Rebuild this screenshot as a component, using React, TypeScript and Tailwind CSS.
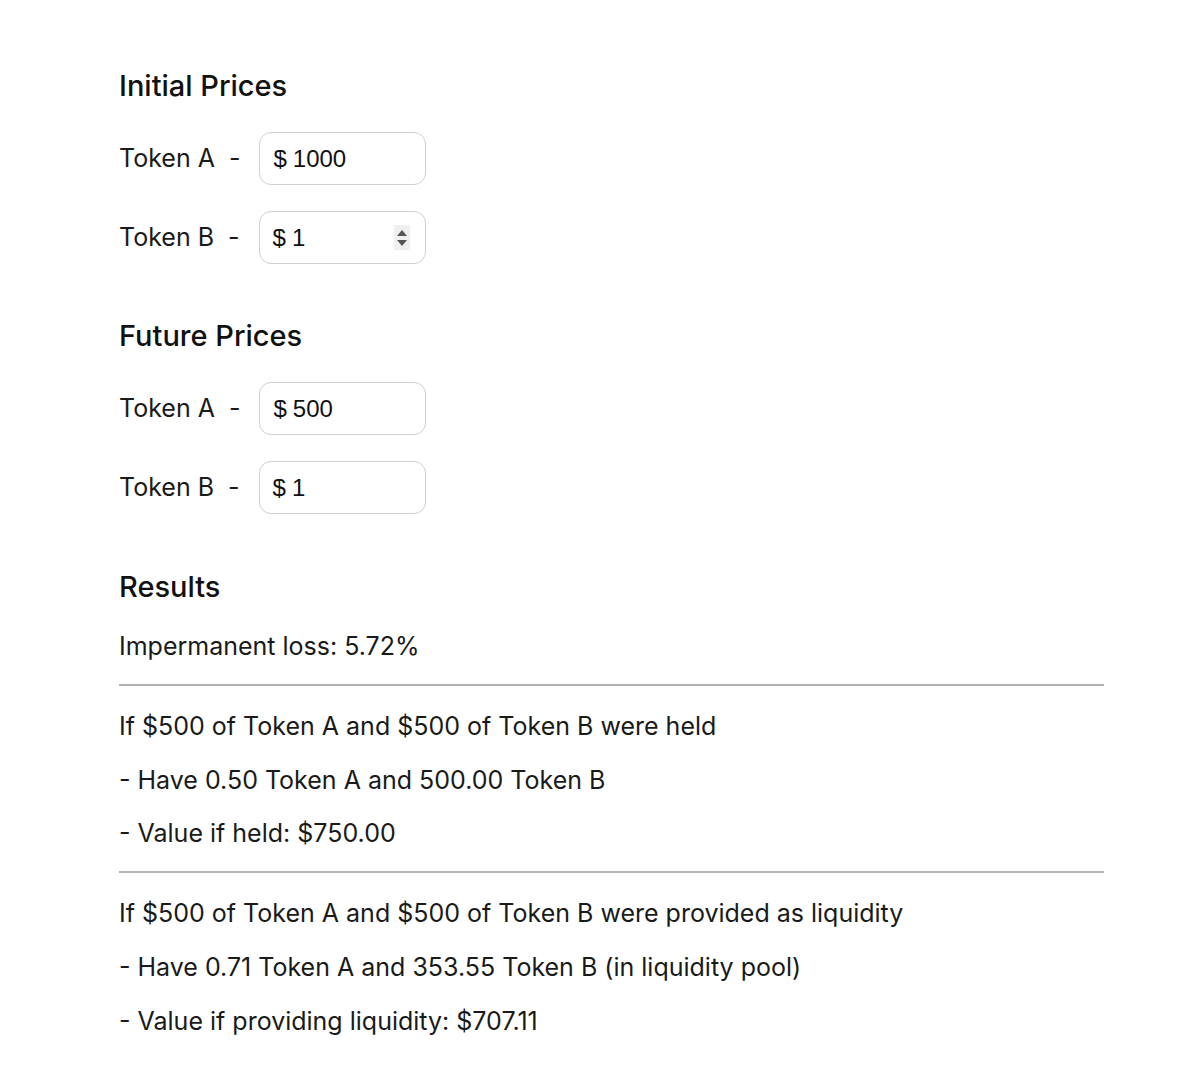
import React from "react";

function Spinner() {
  return (
    <div className="w-[16px] h-[25px] bg-[#efefef] flex flex-col items-center justify-center gap-[4px]">
      <svg width="10" height="6" viewBox="0 0 10 6"><path d="M5 0 L10 6 L0 6 Z" fill="#555" /></svg>
      <svg width="10" height="6" viewBox="0 0 10 6"><path d="M0 0 L10 0 L5 6 Z" fill="#555" /></svg>
    </div>
  );
}

function Row({ label, value, spinner, mt }: { label: string; value: string; spinner?: boolean; mt: string }) {
  return (
    <div className={`flex items-center h-[53px] ${mt}`}>
      <span className="pt-[1px]">{label}</span>
      <span className="ml-[14px] pt-[1px]">-</span>
      <div className="ml-[19px] w-[167px] h-[53px] border border-[#cfcfcf] rounded-[12px] flex items-center pl-[13px] pr-[15px] text-[24px] text-[#111]" style={{ fontFamily: "'Liberation Sans', Arial, sans-serif" }}>
        <span>$</span>
        <span className="ml-[6px] flex-1">{value}</span>
        {spinner && <Spinner />}
      </div>
    </div>
  );
}

export default function App() {
  return (
    <div className="bg-white min-h-[1089px] w-full text-[#1a1a1a] text-[25px]" style={{ fontFamily: "Inter, 'Open Sans', sans-serif" }}>
      <div className="pl-[119px] pr-[96px] pt-[66px]">
        <h2 className="h-[40px] leading-[40px] text-[29px] font-medium text-[#111]">Initial Prices</h2>
        <Row label="Token A" value="1000" mt="mt-[26px]" />
        <Row label="Token B" value="1" spinner mt="mt-[26px]" />
        <h2 className="mt-[52px] h-[40px] leading-[40px] text-[29px] font-medium text-[#111]">Future Prices</h2>
        <Row label="Token A" value="500" mt="mt-[26px]" />
        <Row label="Token B" value="1" mt="mt-[26px]" />
        <h2 className="mt-[53px] h-[40px] leading-[40px] text-[29px] font-medium text-[#111]">Results</h2>
        <p className="mt-[24px] h-[30px] leading-[30px]">Impermanent loss: 5.72%</p>
        <div className="mt-[23px] h-[2px] bg-[#b3b3b3] w-[985px]" />
        <p className="mt-[25px] h-[30px] leading-[30px]">If $500 of Token A and $500 of Token B were held</p>
        <p className="mt-[24px] h-[30px] leading-[30px]">- Have 0.50 Token A and 500.00 Token B</p>
        <p className="mt-[23px] h-[30px] leading-[30px]">- Value if held: $750.00</p>
        <div className="mt-[23px] h-[2px] bg-[#b3b3b3] w-[985px]" />
        <p className="mt-[25px] h-[30px] leading-[30px]">If $500 of Token A and $500 of Token B were provided as liquidity</p>
        <p className="mt-[24px] h-[30px] leading-[30px]">- Have 0.71 Token A and 353.55 Token B (in liquidity pool)</p>
        <p className="mt-[24px] h-[30px] leading-[30px]">- Value if providing liquidity: $707.11</p>
      </div>
    </div>
  );
}
